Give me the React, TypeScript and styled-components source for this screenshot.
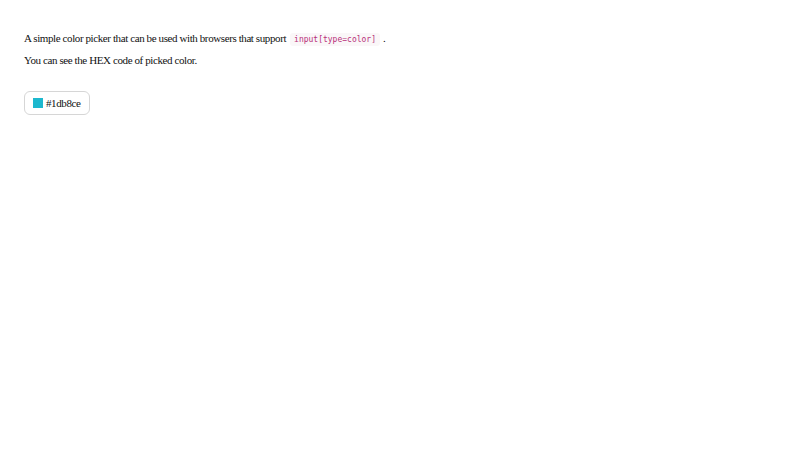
import React, { useState } from "react";
import styled, { createGlobalStyle } from "styled-components";

const Global = createGlobalStyle`
  html, body { margin: 0; padding: 0; background: #fff; }
  body { font-family: "Liberation Serif", "Times New Roman", serif; color: #111; }
`;

const Page = styled.div`
  padding: 31px 24px;
  display: flex;
  flex-direction: column;
  align-items: flex-start;
`;

const Para = styled.p`
  margin: 0 0 6px 0;
  font-size: 11px;
  letter-spacing: -0.4px;
  line-height: 14px;
`;

const Code = styled.code`
  font-family: "DejaVu Sans Mono", "Liberation Mono", monospace;
  font-size: 8px;
  letter-spacing: 0;
  color: #b8307a;
  background: #faf7f8;
  padding: 2px 4px;
  margin: 0 3px 0 4px;
  border-radius: 3px;
`;

const PickerButton = styled.label`
  margin-top: 18px;
  display: inline-flex;
  align-items: center;
  gap: 3px;
  height: 24px;
  padding: 0 9px 0 8px;
  border: 1px solid #d6d6d6;
  border-radius: 6px;
  background: #fff;
  font-size: 11px;
  letter-spacing: -0.4px;
  box-sizing: border-box;
  cursor: pointer;
  position: relative;
`;

const Swatch = styled.span<{ $color: string }>`
  width: 10px;
  height: 10px;
  background: ${(p) => p.$color};
  display: inline-block;
`;

const HiddenInput = styled.input`
  position: absolute;
  opacity: 0;
  width: 0;
  height: 0;
  pointer-events: none;
`;

export default function App() {
  const [color, setColor] = useState("#1db8ce");
  return (
    <>
      <Global />
      <Page>
        <Para>
          A simple color picker that can be used with browsers that support
          <Code>input[type=color]</Code>.
        </Para>
        <Para>You can see the HEX code of picked color.</Para>
        <PickerButton>
          <Swatch $color={color} />
          {color}
          <HiddenInput type="color" value={color} onChange={(e) => setColor(e.target.value)} />
        </PickerButton>
      </Page>
    </>
  );
}
